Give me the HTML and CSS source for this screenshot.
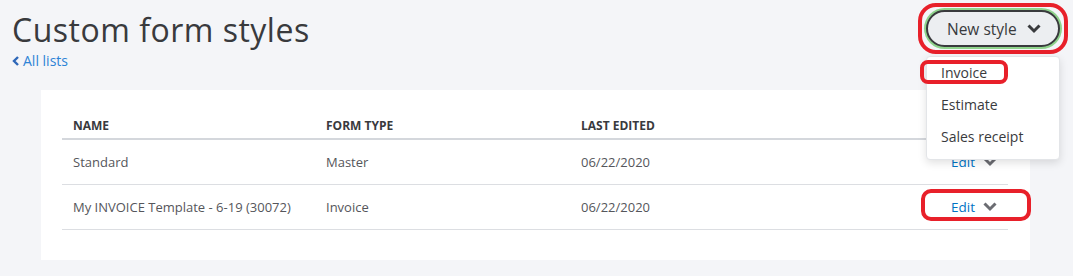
FILE: index.html
```html
<!DOCTYPE html>
<html>
<head>
<meta charset="utf-8">
<link rel="stylesheet" href="styles.css">
</head>
<body>
<div class="page">
  <header class="top">
    <div class="titles">
      <h1 class="title">Custom form styles</h1>
      <a class="back" href="#"><svg class="back-ico" width="8" height="10" viewBox="0 0 8 10"><polyline points="6,1 2,5 6,9" fill="none" stroke="#2e67b8" stroke-width="2.4"/></svg>All lists</a>
    </div>
    <div class="new-wrap">
      <button class="new-btn">New style <svg class="chev" width="14" height="10" viewBox="0 0 14 10"><polyline points="1.5,1.5 7,7 12.5,1.5" fill="none" stroke="#393a3d" stroke-width="3"/></svg></button>
      <span class="mark mark-btn"></span>
      <ul class="menu">
        <li>Invoice</li>
        <li>Estimate</li>
        <li>Sales receipt</li>
      </ul>
      <span class="mark mark-invoice"></span>
    </div>
  </header>
  <section class="card">
    <div class="table">
      <div class="row head">
        <div class="cell">NAME</div>
        <div class="cell">FORM TYPE</div>
        <div class="cell">LAST EDITED</div>
        <div class="cell act"></div>
      </div>
      <div class="row">
        <div class="cell">Standard</div>
        <div class="cell">Master</div>
        <div class="cell">06/22/2020</div>
        <div class="cell act"><a class="edit" href="#">Edit</a><svg class="chev" width="14" height="10" viewBox="0 0 14 10"><polyline points="1.5,1.5 7,7 12.5,1.5" fill="none" stroke="#6b6c72" stroke-width="3"/></svg></div>
      </div>
      <div class="row">
        <div class="cell">My INVOICE Template - 6-19 (30072)</div>
        <div class="cell">Invoice</div>
        <div class="cell">06/22/2020</div>
        <div class="cell act"><a class="edit" href="#">Edit</a><svg class="chev" width="14" height="10" viewBox="0 0 14 10"><polyline points="1.5,1.5 7,7 12.5,1.5" fill="none" stroke="#6b6c72" stroke-width="3"/></svg><span class="mark mark-edit"></span></div>
      </div>
    </div>
  </section>
</div>
</body>
</html>
```
FILE: styles.css
```css
* { box-sizing: border-box; }
html, body { margin: 0; padding: 0; }
body {
  background: #f4f5f8;
  font-family: "Open Sans", "Noto Sans", sans-serif;
  color: #393a3d;
  width: 1073px;
  height: 276px;
  overflow: hidden;
}
.top {
  display: flex;
  justify-content: space-between;
  align-items: flex-start;
  height: 90px;
}
.titles { padding: 9px 0 0 12px; }
.title {
  margin: 0;
  font-size: 32px;
  font-weight: 400;
  line-height: 42px;
  letter-spacing: 0.5px;
  color: #393a3d;
}
.back {
  display: flex;
  width: fit-content;
  align-items: center;
  gap: 2px;
  margin-top: 1px;
  font-size: 14px;
  line-height: 18px;
  color: #2d83d6;
  text-decoration: none;
}
.back-ico { margin-right: 1px; }
.new-wrap {
  position: relative;
  margin: 10px 13px 0 0;
}
.new-btn {
  display: flex;
  align-items: center;
  gap: 10px;
  height: 37px;
  width: 134px;
  padding: 0 0 0 19px;
  border: 2px solid #393a3d;
  border-radius: 19px;
  background: #eceef1;
  box-shadow: 0 0 0 2px #8fd38c;
  font-family: inherit;
  font-size: 15.5px;
  color: #393a3d;
}
.mark {
  position: absolute;
  border: 4px solid #e8202a;
  pointer-events: none;
}
.mark-btn {
  left: -8px; top: -7px;
  width: 150px; height: 51px;
  border-radius: 18px;
}
.menu {
  position: absolute;
  left: 0; top: 46px;
  width: 134px;
  margin: 0;
  padding: 0 0 6px;
  list-style: none;
  background: #fff;
  border: 1px solid #e3e5e8;
  border-radius: 4px;
  box-shadow: 0 3px 8px rgba(0,0,0,0.12);
  z-index: 2;
}
.menu li {
  padding: 0 14px;
  height: 32px;
  line-height: 32px;
  font-size: 14px;
  color: #393a3d;
}
.mark-invoice {
  left: -6px; top: 50px;
  width: 88px; height: 24px;
  border-radius: 8px;
  z-index: 3;
}
.card {
  margin-left: 41px;
  width: 989px;
  height: 170px;
  background: #fff;
  padding: 21px 22px 0 21px;
}
.table { width: 946px; }
.row {
  display: grid;
  grid-template-columns: 253px 255px 1fr 120px;
  height: 45px;
  align-items: center;
  border-bottom: 1px solid #dcdee2;
}
.row.head {
  height: 29px;
  border-bottom: 2px solid #d4d7dc;
  align-items: start;
  padding-top: 6px;
}
.cell {
  padding-left: 11px;
  font-size: 13px;
  color: #55565b;
}
.head .cell {
  font-size: 12px;
  font-weight: 700;
  color: #393a3d;
}
.act {
  position: relative;
  align-self: stretch;
  display: flex;
  justify-content: flex-end;
  align-items: center;
  gap: 8px;
  padding-right: 11px;
}
.edit {
  color: #0073c4;
  text-decoration: none;
  font-size: 13.5px;
  font-weight: 500;
}
.mark-edit {
  left: 33px; top: 4px;
  width: 110px; height: 32px;
  border-radius: 10px;
}
```
